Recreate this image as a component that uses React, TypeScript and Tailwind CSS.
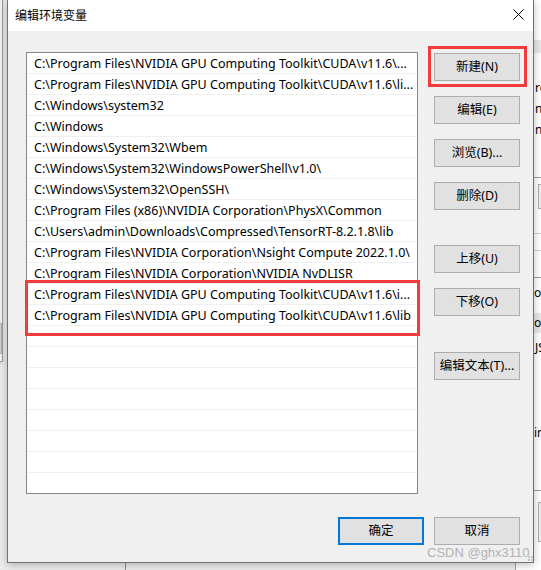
import React from "react";

const ui = '"Noto Sans", "Noto Sans CJK SC", sans-serif';

const paths: string[] = [
  "C:\\Program Files\\NVIDIA GPU Computing Toolkit\\CUDA\\v11.6\\...",
  "C:\\Program Files\\NVIDIA GPU Computing Toolkit\\CUDA\\v11.6\\li...",
  "C:\\Windows\\system32",
  "C:\\Windows",
  "C:\\Windows\\System32\\Wbem",
  "C:\\Windows\\System32\\WindowsPowerShell\\v1.0\\",
  "C:\\Windows\\System32\\OpenSSH\\",
  "C:\\Program Files (x86)\\NVIDIA Corporation\\PhysX\\Common",
  "C:\\Users\\admin\\Downloads\\Compressed\\TensorRT-8.2.1.8\\lib",
  "C:\\Program Files\\NVIDIA Corporation\\Nsight Compute 2022.1.0\\",
  "C:\\Program Files\\NVIDIA Corporation\\NVIDIA NvDLISR",
  "C:\\Program Files\\NVIDIA GPU Computing Toolkit\\CUDA\\v11.6\\i...",
  "C:\\Program Files\\NVIDIA GPU Computing Toolkit\\CUDA\\v11.6\\lib",
  "",
  "",
  "",
  "",
  "",
  "",
  "",
  "",
];

function Btn({ label, primary = false }: { label: string; primary?: boolean }) {
  return (
    <div
      className={
        "w-[86px] h-[28px] flex items-center justify-center pt-px bg-[#e1e1e1] text-[12.5px] text-black " +
        (primary ? "border-2 border-[#0078d7]" : "border border-[#adadad]")
      }
    >
      {label}
    </div>
  );
}

export default function App() {
  return (
    <div
      className="relative w-[541px] h-[570px] overflow-hidden bg-[#ececec]"
      style={{ fontFamily: ui }}
    >
      {/* window behind, left side */}
      <div className="absolute left-[-300px] top-[-10px] w-[303px] h-[372px] bg-[#f0f0f0] border border-[#9a9a9a] shadow-md">
        <div className="absolute right-0 top-[332px] w-[10px] h-[31px] bg-[#cfcfcf] border border-[#b0b0b0]" />
      </div>
      {/* vertical edge below the dialog */}
      <div className="absolute left-[125px] top-[555px] w-px h-[20px] bg-[#8a8a8a]" />

      {/* window behind, right side */}
      <div className="absolute left-[515px] top-0 w-[60px] h-[570px] bg-white border-l border-[#a0a0a0]">
        <div className="absolute left-0 top-[40px] w-full h-[13px] bg-[#e8e8e8]" />
        <div className="absolute left-[19px] top-[82px] text-[12px] text-black leading-none">ro</div>
        <div className="absolute left-[19px] top-[103px] text-[12px] text-black leading-none">np</div>
        <div className="absolute left-[19px] top-[124px] text-[12px] text-black leading-none">np</div>
        <div className="absolute left-0 top-[177px] w-full h-px bg-[#a0a0a0]" />
        <div className="absolute left-[22px] top-[184px] w-[30px] h-[25px] border border-[#adadad] bg-[#f0f0f0]" />
        <div className="absolute left-0 top-[233px] w-full h-px bg-[#d0d0d0]" />
        <div className="absolute left-0 top-[250px] w-full h-px bg-[#d0d0d0]" />
        <div className="absolute left-0 top-[277px] w-full h-px bg-[#a0a0a0]" />
        <div className="absolute left-[18px] top-[287px] text-[12px] text-black leading-none">ol</div>
        <div className="absolute left-0 top-[313px] w-full h-[20px] bg-[#e8e8e8]" />
        <div className="absolute left-[18px] top-[317px] text-[12px] text-black leading-none">ol</div>
        <div className="absolute left-[19px] top-[342px] text-[12px] text-black leading-none">JS</div>
        <div className="absolute left-[18px] top-[427px] text-[12px] text-black leading-none">in</div>
        <div className="absolute left-0 top-[490px] w-full h-px bg-[#a0a0a0]" />
        <div className="absolute left-[22px] top-[502px] w-[30px] h-[40px] border border-[#adadad] bg-[#f0f0f0]" />
      </div>

      {/* dialog */}
      <div className="absolute left-[7px] top-0 w-[527px] h-[563px] flex flex-col border border-t-0 border-[#707070] bg-[#f0f0f0] shadow-[0_2px_8px_rgba(0,0,0,0.25)]">
        {/* title bar */}
        <div className="h-[31px] bg-white flex items-center justify-between pl-[7px] pr-[9px]">
          <span className="text-[12px] text-black">编辑环境变量</span>
          <svg width="11" height="11" viewBox="0 0 11 11" className="mt-[-2px]">
            <path d="M0.5 0.5 L10.5 10.5 M10.5 0.5 L0.5 10.5" stroke="#000" strokeWidth="1" />
          </svg>
        </div>

        {/* body */}
        <div className="flex-1 flex flex-col pl-[18px] pr-[13px] pt-[21px]">
          <div className="flex">
            <div className="w-[392px] h-[442px] border border-[#828790] bg-white overflow-hidden">
              {paths.map((p, i) => (
                <div
                  key={i}
                  className="h-[21px] border-b border-[#f0f0f0] flex items-center pt-[3px] pl-[7px] text-[12.5px] text-black whitespace-nowrap"
                >
                  {p}
                </div>
              ))}
            </div>
            <div className="ml-auto w-[86px] flex flex-col pt-px">
              <Btn label="新建(N)" />
              <div className="h-[15px]" />
              <Btn label="编辑(E)" />
              <div className="h-[15px]" />
              <Btn label="浏览(B)..." />
              <div className="h-[15px]" />
              <Btn label="删除(D)" />
              <div className="h-[35px]" />
              <Btn label="上移(U)" />
              <div className="h-[15px]" />
              <Btn label="下移(O)" />
              <div className="h-[36px]" />
              <Btn label="编辑文本(T)..." />
            </div>
          </div>
          <div className="flex justify-end gap-[10px] mt-[23px]">
            <Btn label="确定" primary />
            <Btn label="取消" />
          </div>
        </div>
      </div>

      {/* red annotation frames */}
      <div className="absolute left-[428px] top-[46px] w-[99px] h-[41px] border-[3px] border-[#f23c3c]" />
      <div className="absolute left-[25px] top-[280px] w-[395px] h-[56px] border-[3px] border-[#f23c3c]" />

      {/* watermark */}
      <div
        className="absolute left-[427px] top-[546px] text-[13px] leading-none text-[#b2b2b2] whitespace-nowrap"
        style={{ fontFamily: '"Liberation Sans", Arial, sans-serif' }}
      >
        CSDN @ghx3110
      </div>
      <div className="absolute left-[528px] top-[556px] grid grid-cols-2 gap-[1px]">
        <div className="w-[2px] h-[2px] bg-[#c8c8c8]" />
        <div className="w-[2px] h-[2px] bg-[#c8c8c8]" />
        <div className="w-[2px] h-[2px] bg-[#c8c8c8]" />
        <div className="w-[2px] h-[2px] bg-[#c8c8c8]" />
      </div>
    </div>
  );
}
